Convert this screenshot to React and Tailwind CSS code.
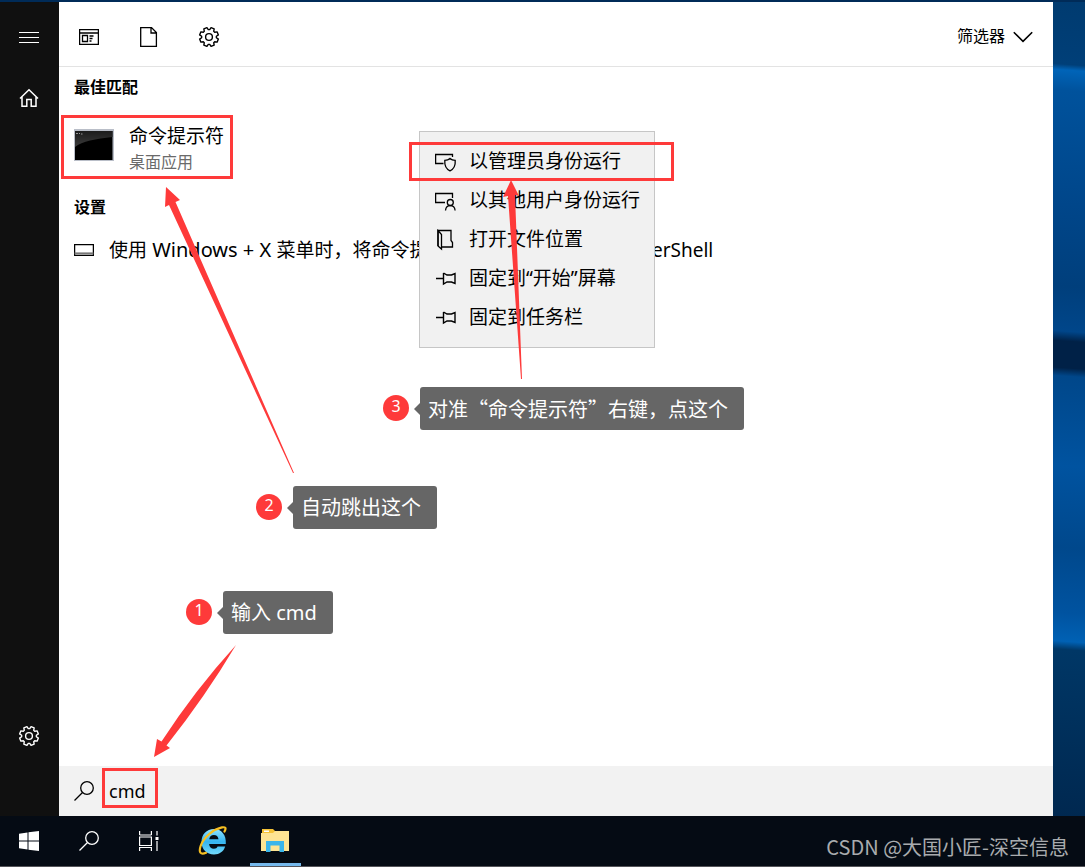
import React from "react";

const RED = "#fe3a3a";

// eight teeth, with a notch at each compass point
function gearPath(cx, cy) {
  const points = [];
  for (let i = 0; i < 8; i++) {
    const mid = 22.5 + i * 45;
    [[-17, 7.4], [-10, 9.6], [10, 9.6], [17, 7.4]].forEach(([offset, r]) => {
      const a = ((mid + offset) * Math.PI) / 180;
      points.push((cx + r * Math.cos(a)).toFixed(2) + " " + (cy + r * Math.sin(a)).toFixed(2));
    });
  }
  return "M" + points.join("L") + "Z";
}

function GearIcon() {
  return (
    <svg className="w-[22px] h-[22px]" viewBox="0 0 22 22" fill="none" stroke="currentColor" strokeWidth="1.4" strokeLinejoin="round">
      <path d={gearPath(11, 11)} />
      <circle cx="11" cy="11" r="3.4" />
    </svg>
  );
}

function SearchIcon() {
  return (
    <svg className="w-5 h-5" viewBox="0 0 20 20" fill="none" stroke="currentColor" strokeWidth="1.3">
      <circle cx="13" cy="7" r="6.3" />
      <path d="M8.5 11.5L0.5 19.5" />
    </svg>
  );
}

function PinIcon() {
  return (
    <svg className="w-[22px] h-[22px]" viewBox="0 0 22 22" fill="none" stroke="currentColor" strokeWidth="1.4">
      <path d="M1 10.5H8M8.5 5V16L12 14H16.5L20 15.5V5.5L16.5 7H12L8.5 5" />
    </svg>
  );
}

function RunAdminIcon() {
  return (
    <svg className="w-[22px] h-[22px]" viewBox="0 0 22 22" fill="none" stroke="currentColor" strokeWidth="1.3">
      <path d="M8.5 12.5H0.6V3.5H17.5V6" />
      <path d="M15 7.5C13.5 9 11.5 9.4 9.8 9.4C9.4 14.5 11 18 15 19.8C19 18 20.6 14.5 20.2 9.4C18.5 9.4 16.5 9 15 7.5Z" />
    </svg>
  );
}

function RunUserIcon() {
  return (
    <svg className="w-[22px] h-[22px]" viewBox="0 0 22 22" fill="none" stroke="currentColor" strokeWidth="1.3">
      <path d="M10 12.5H0.6V3.5H17.5V8" />
      <circle cx="15.3" cy="12.5" r="3" />
      <path d="M10.5 20.5C10.8 17.5 12.6 15.7 15.3 15.7C18 15.7 19.8 17.5 20.1 20.5" />
    </svg>
  );
}

function OpenFolderIcon() {
  return (
    <svg className="w-[22px] h-[22px]" viewBox="0 0 22 22" fill="none" stroke="currentColor" strokeWidth="1.3">
      <path d="M3 17V1.5H16V11.5L17.5 13.5V18H7" />
      <path d="M3 1.5L6.500 5.500V20L3 17Z" />
    </svg>
  );
}

function InternetExplorerIcon() {
  return (
    <svg className="w-[30px] h-[30px]" viewBox="0 0 30 30">
      <defs>
        <linearGradient id="ieBlue" x1="0" y1="0" x2="0" y2="1">
          <stop offset="0" stopColor="#8fe3ff" />
          <stop offset="0.5" stopColor="#35b4f0" />
          <stop offset="1" stopColor="#72d9fb" />
        </linearGradient>
      </defs>
      <path d="M16 3C8.5 3 3.5 8.5 3.5 16C3.5 23.3 8.8 28.5 16 28.5C21.5 28.5 25.6 25.7 27.2 20.6H19.6C18.9 22.1 17.8 22.8 16 22.8C13.1 22.8 11.3 21.2 11.1 18H27.8C28.5 9 23.5 3 16 3ZM11.2 13.2C11.6 10.5 13.3 9 15.9 9C18.5 9 20.2 10.5 20.5 13.2Z" fill="url(#ieBlue)" />
      <path d="M26.500 5.500C28.5 2 27.500 0.800 24 1.400C16.500 3 6 10 2.600 20C0.500 26.500 2.500 29 8 26.800" fill="none" stroke="#f6bf22" strokeWidth="2.2" strokeLinecap="round" />
    </svg>
  );
}

function ExplorerIcon() {
  return (
    <svg className="w-7 h-6" viewBox="0 0 28 24">
      <path d="M1 0H12L14 2V5H1Z" fill="#f5c236" />
      <path d="M0 4H12L14 2H28V22H0Z" fill="#fee493" />
      <path d="M3 1.5H8V3H3Z" fill="#fff" />
      <path d="M5 23V12H23V23H18.5V16.5H9.5V23Z" fill="#3bb5ea" />
    </svg>
  );
}

function CmdThumbnail() {
  return (
    <svg className="w-10 h-8 mb-1" viewBox="0 0 40 32">
      <defs>
        <linearGradient id="cmdGloss" x1="0" y1="0" x2="0" y2="1">
          <stop offset="0" stopColor="#1c1c1c" />
          <stop offset="1" stopColor="#3c3c3c" />
        </linearGradient>
      </defs>
      <rect width="40" height="32" fill="#b9bec8" />
      <rect x="1" y="2" width="37.5" height="29" fill="#000" />
      <path d="M1 2H38.5V8C22 10 8 12 1 18Z" fill="url(#cmdGloss)" />
      <path d="M2 4.5H4M5 4.5H6M7 5H8.5" stroke="#999" />
    </svg>
  );
}

function Callout({ number, className, children }) {
  return (
    <div className={"absolute flex items-center text-white whitespace-nowrap " + className}>
      <span className="w-[26px] h-[26px] mb-0.5 rounded-full bg-[#fe3a3a] flex items-center justify-center text-base leading-6 pb-1">
        {number}
      </span>
      <svg className="w-[6px] h-3 ml-[5px]" viewBox="0 0 6 12">
        <path d="M6 0V12L0 6Z" fill="#666" />
      </svg>
      <span className="h-[43px] pl-2 pr-4 rounded-[3px] bg-[#666] flex items-center text-xl">{children}</span>
    </div>
  );
}

const menuItems = [
  { label: "以管理员身份运行", icon: <RunAdminIcon /> },
  { label: "以其他用户身份运行", icon: <RunUserIcon /> },
  { label: "打开文件位置", icon: <OpenFolderIcon /> },
  { label: "固定到“开始”屏幕", icon: <PinIcon /> },
  { label: "固定到任务栏", icon: <PinIcon /> }
];

function ContextMenu() {
  return (
    <div className="absolute left-[360px] top-[129px] w-[236px] py-[10px] bg-[#f1f1f1] border border-[#c6c6c6]">
      {menuItems.map((item) => (
        <button key={item.label} className="w-full h-[39px] pl-[15px] flex items-center gap-3 text-[19px] whitespace-nowrap">
          {item.icon}
          {item.label}
        </button>
      ))}
      <div className="absolute -left-[11px] top-[10px] w-[265px] h-[39px] border-3 border-[#fe3a3a] pointer-events-none" />
    </div>
  );
}

function Sidebar() {
  return (
    <nav className="w-[59px] shrink-0 bg-[#101010] text-white flex flex-col pt-[5px] pb-[50px]">
      <button aria-label="菜单" className="w-[58px] h-[60px] pt-px flex items-center justify-center">
        <svg className="w-5 h-3" viewBox="0 0 20 12" stroke="currentColor">
          <path d="M0 0.5H20M0 5.5H20M0 10.5H20" />
        </svg>
      </button>
      <button aria-label="主页" className="w-[58px] h-[60px] pt-px flex items-center justify-center">
        <svg className="w-5 h-5" viewBox="0 0 20 20" fill="none" stroke="currentColor" strokeWidth="1.5">
          <path d="M1 10.5L10 1.8L19 10.5M3 9V18.2H7.8V11.5H12.2V18.2H17V9" />
        </svg>
      </button>
      <button aria-label="设置" className="w-[58px] h-[60px] mt-auto flex items-center justify-center">
        <GearIcon />
      </button>
    </nav>
  );
}

function Toolbar() {
  return (
    <div className="h-[65px] pt-[5px] border-b border-[#e3e3e3] flex items-center">
      <button aria-label="应用" className="w-[60px] h-full flex items-center justify-center">
        <svg className="w-5 h-4" viewBox="0 0 20 16" fill="none" stroke="currentColor" strokeWidth="1.3">
          <path d="M0.6 0.6H19.4V15.4H0.6ZM0.6 4H19.4M3.5 6.5H8.5V12.5H3.5ZM10.5 7H14.5M10.5 9.5H13.5M10.5 12H12.5" />
        </svg>
      </button>
      <button aria-label="文档" className="w-[60px] h-full flex items-center justify-center">
        <svg className="w-[18px] h-5" viewBox="0 0 18 20" fill="none" stroke="currentColor" strokeWidth="1.3">
          <path d="M0.7 0.6H11.5L16.4 5.5V19.4H0.7ZM11 0.6V6H16.4" />
        </svg>
      </button>
      <button aria-label="设置" className="w-[60px] h-full flex items-center justify-center">
        <GearIcon />
      </button>
      <button className="ml-auto mr-5 flex items-center gap-2 text-base">
        <span className="pb-0.5">筛选器</span>
        <svg className="w-5 h-3" viewBox="0 0 20 12" fill="none" stroke="currentColor" strokeWidth="1.6">
          <path d="M0.8 1.2L10 10.4L19.2 1.2" />
        </svg>
      </button>
    </div>
  );
}

function Results() {
  return (
    <div className="flex-1">
      <h2 className="h-10 pl-[15px] flex items-center text-base font-bold">最佳匹配</h2>
      <div className="relative">
        <button className="w-full h-20 pl-[15px] flex items-center gap-[15px] text-left">
          <CmdThumbnail />
          <span className="flex flex-col pt-0.5">
            <span className="text-[19px] leading-7">命令提示符</span>
            <span className="text-base leading-6 text-[#6a6a6a]">桌面应用</span>
          </span>
        </button>
        <div className="absolute left-[2px] top-2 w-[172px] h-16 border-3 border-[#fe3a3a] pointer-events-none" />
      </div>
      <h2 className="h-10 pl-[15px] flex items-center text-base font-bold">设置</h2>
      <button className="h-[46px] pl-[15px] flex items-center gap-[15px] text-[19px] whitespace-nowrap">
        <svg className="w-5 h-3" viewBox="0 0 20 12" fill="none" stroke="currentColor" strokeWidth="1.3">
          <path d="M0.6 0.6H19.4V11.4H0.6Z" />
          <path d="M0.6 9.4H19.4" stroke="#777" strokeWidth="2" />
        </svg>
        <span>
          使用<span className="text-xl"> Windows + X </span>菜单时，将命令提示符替换为 Windows PowerShell
        </span>
      </button>
    </div>
  );
}

function SearchBar() {
  return (
    <div className="relative h-[50px] pl-[15px] bg-[#f2f2f2] flex items-center">
      <SearchIcon />
      <input type="text" aria-label="搜索" defaultValue="cmd" className="flex-1 ml-[15px] bg-transparent text-lg outline-none" />
      <div className="absolute left-[43px] top-[2px] w-14 h-10 border-3 border-[#fe3a3a] pointer-events-none" />
    </div>
  );
}

function Arrows() {
  return (
    <svg className="absolute inset-0 w-full h-full pointer-events-none" fill={RED}>
      <path d="M166 187L180 200L175.500 202L294 473L293 473L169 205L165 207Z" />
      <path d="M511 180L519 196L515 195L522 379L521 379L508 196L503 197Z" />
      <path d="M154 757L157 739L161.500 741.500Q195 690 236 645Q205 697 166.500 745.500L170 748Z" />
    </svg>
  );
}

function Taskbar() {
  return (
    <footer className="h-[51px] bg-[#050b14] border-b border-[#55555a] text-white flex items-center">
      <button aria-label="开始" className="w-[58px] h-full flex items-center justify-center">
        <svg className="w-5 h-5" viewBox="0 0 20 20" fill="currentColor">
          <path d="M0 2.7L8.500 1.500V9.500H0ZM9.500 1.300L20 0V9.500H9.500ZM0 10.500H8.500V18.500L0 17.300ZM9.500 10.500H20V20L9.500 18.700Z" />
        </svg>
      </button>
      <button aria-label="搜索" className="w-[62px] h-full flex items-center justify-center">
        <SearchIcon />
      </button>
      <button aria-label="任务视图" className="w-[58px] h-full flex items-center justify-center">
        <svg className="w-5 h-5" viewBox="0 0 20 20" fill="none" stroke="currentColor" strokeWidth="1.2">
          <path d="M0.600 0V4M12.400 0V4M0.600 4H12.400M0.600 6V14.500H12.400V6ZM0.600 20V16.500H12.400V20M18 0V4.500M18 10V20" />
          <path d="M16.500 6H19.500V9H16.500Z" fill="currentColor" stroke="none" />
        </svg>
      </button>
      <button aria-label="Internet Explorer" className="w-[50px] h-full ml-[10px] flex items-center justify-center">
        <InternetExplorerIcon />
      </button>
      <button aria-label="文件资源管理器" className="w-[51px] h-full ml-3 pt-[3px] pr-px border-b-3 border-[#76b9ed] flex items-center justify-center">
        <ExplorerIcon />
      </button>
      <p className="ml-auto mr-4 pt-3 text-xl text-[#a9abae] font-['Noto_Sans_CJK_SC',sans-serif] whitespace-nowrap">
        CSDN @大国小匠-深空信息
      </p>
    </footer>
  );
}

export default function App() {
  return (
    <div
      lang="zh-CN"
      className="relative min-h-screen flex flex-col text-black bg-[#002b58] font-['Noto_Sans','Noto_Sans_CJK_SC',sans-serif]"
    >
      <div className="flex-1 flex pt-[2px]">
        <Sidebar />
        <main className="relative flex-1 min-w-0 bg-white flex flex-col">
          <Toolbar />
          <Results />
          <SearchBar />
          <ContextMenu />
          <Callout number="3" className="left-[324px] top-[385px]">
            <span className="font-['Noto_Sans_CJK_SC',sans-serif]">对准“命令提示符”右键，点这个</span>
          </Callout>
          <Callout number="2" className="left-[197px] top-[484px]">自动跳出这个</Callout>
          <Callout number="1" className="left-[127px] top-[589px]">输入 cmd</Callout>
        </main>
        <div className="w-8 shrink-0 bg-[linear-gradient(184deg,#003b70_0%,#003f78_7.800%,#0064b8_8.500%,#00529c_11%,#00468a_25%,#003f7c_35%,#00468a_40.500%,#002147_41.700%,#002147_45%,#00478a_46%,#0053a0_57%,#00488c_67%,#0053a0_75%,#0061b4_78.500%,#003766_79.500%,#002850_100%)]" />
      </div>
      <Taskbar />
      <Arrows />
    </div>
  );
}
